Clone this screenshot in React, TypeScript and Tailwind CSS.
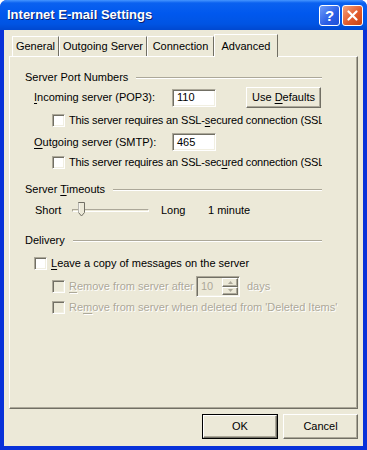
import React from "react";

const sunken =
  "border border-t-[#aca899] border-l-[#aca899] border-b-white border-r-white shadow-[inset_1px_1px_0_#716f64,inset_-1px_-1px_0_#f1efe2]";
const raised =
  "border border-t-white border-l-white border-b-[#716f64] border-r-[#716f64] shadow-[inset_-1px_-1px_0_#aca899]";

function U({ children }: { children: React.ReactNode }) {
  return <span className="underline underline-offset-[2px]">{children}</span>;
}

function Checkbox({ disabled }: { disabled?: boolean }) {
  return (
    <span
      className={`block h-[13px] w-[13px] shrink-0 ${sunken} ${
        disabled ? "bg-[#ece9d8]" : "bg-white"
      }`}
    />
  );
}

function GroupHeader({ label }: { label: React.ReactNode }) {
  return (
    <div className="flex h-[13px] items-center">
      <span className="leading-[13px]">{label}</span>
      <div className="ml-[8px] flex-1 border-t border-b border-t-[#aca899] border-b-white" />
    </div>
  );
}

function Button({
  children,
  isDefault,
  className,
}: {
  children: React.ReactNode;
  isDefault?: boolean;
  className?: string;
}) {
  return (
    <div className={`${isDefault ? "border border-black" : ""} ${className ?? ""}`}>
      <div
        className={`flex h-full w-full items-center justify-center bg-[#ece9d8] ${raised}`}
      >
        <span>{children}</span>
      </div>
    </div>
  );
}

export default function App() {
  const tabs = [
    { label: "General", w: "w-[47px]" },
    { label: "Outgoing Server", w: "w-[88px]" },
    { label: "Connection", w: "w-[67px]" },
  ];

  return (
    <div
      className="flex h-[450px] w-[367px] flex-col overflow-hidden rounded-t-[7px] bg-[#0831d9] text-[11px] text-black"
      style={{ fontFamily: '"Liberation Sans", Arial, sans-serif' }}
    >
      {/* title bar */}
      <div className="flex h-[30px] shrink-0 items-center bg-[linear-gradient(to_bottom,#4595ff_0%,#0a61f0_10%,#0058ee_45%,#0054e3_80%,#0048d0_100%)] pl-[7px] pr-[4px]">
        <span className="flex-1 text-[13px] font-bold text-white [text-shadow:1px_1px_0_#0a1e6e]">
          Internet E-mail Settings
        </span>
        <div className="flex gap-[2px]">
          <div className="flex h-[21px] w-[21px] items-center justify-center rounded-[3px] border border-white bg-[linear-gradient(135deg,#6f9cf8,#2a5ee6_60%,#1d4fd8)] text-[15px] font-bold leading-none text-white">
            ?
          </div>
          <div className="flex h-[21px] w-[21px] items-center justify-center rounded-[3px] border border-white bg-[linear-gradient(135deg,#f3a37f,#e35b2c_55%,#c94313)]">
            <svg width="11" height="11" viewBox="0 0 11 11">
              <path d="M1.5 1.5 L9.5 9.5 M9.5 1.5 L1.5 9.5" stroke="white" strokeWidth="2.2" strokeLinecap="round" />
            </svg>
          </div>
        </div>
      </div>

      {/* window body */}
      <div className="mx-[4px] mb-[4px] flex flex-1 flex-col bg-[#ece9d8] px-[5px]">
        {/* tabs */}
        <div className="mt-[4px] flex h-[22px] items-end pl-[3px]">
          {tabs.map((t) => (
            <div
              key={t.label}
              className={`${t.w} flex h-[20px] items-center justify-center border-t border-l border-r border-t-white border-l-white border-r-[#716f64]`}
            >
              {t.label}
            </div>
          ))}
          <div className="relative z-10 -mb-px flex h-[23px] w-[64px] items-start justify-center border-t border-l border-r border-t-white border-l-white border-r-[#716f64] bg-[#ece9d8] pt-[3px]">
            Advanced
          </div>
        </div>

        {/* tab panel */}
        <div className="h-[353px] border border-t-white border-l-white border-b-[#716f64] border-r-[#716f64] shadow-[inset_-1px_-1px_0_#aca899]">
          <div className="ml-[15px] w-[297px]">
            <div className="mt-[14px]">
              <GroupHeader label="Server Port Numbers" />
            </div>

            <div className="mt-[3px] flex h-[21px] items-center">
              <span className="ml-[9px] w-[138px]">
                <U>I</U>ncoming server (POP3):
              </span>
              <div className={`flex h-[18px] w-[44px] items-center bg-white pl-[4px] ${sunken}`}>
                110
              </div>
              <Button className="ml-[30px] h-[21px] w-[75px]">
                Use <U>D</U>efaults
              </Button>
            </div>

            <div className="mt-[6px] flex h-[13px] items-center overflow-hidden whitespace-nowrap tracking-[-0.15px]">
              <span className="ml-[27px]">
                <Checkbox />
              </span>
              <span className="ml-[4px]">
                This server requires an SSL-<U>s</U>ecured connection (SSL)
              </span>
            </div>

            <div className="mt-[6px] flex h-[18px] items-center">
              <span className="ml-[9px] w-[138px]">
                <U>O</U>utgoing server (SMTP):
              </span>
              <div className={`flex h-[18px] w-[44px] items-center bg-white pl-[4px] ${sunken}`}>
                465
              </div>
            </div>

            <div className="mt-[5px] flex h-[13px] items-center overflow-hidden whitespace-nowrap tracking-[-0.15px]">
              <span className="ml-[27px]">
                <Checkbox />
              </span>
              <span className="ml-[4px]">
                This server requires an SSL-sec<U>u</U>red connection (SSL)
              </span>
            </div>

            <div className="mt-[14px]">
              <GroupHeader
                label={
                  <>
                    Server <U>T</U>imeouts
                  </>
                }
              />
            </div>

            <div className="mt-[6px] flex h-[16px] items-center">
              <span className="ml-[10px] w-[37px]">Short</span>
              <div className="relative h-[16px] w-[77px]">
                <div className="absolute left-0 right-0 top-[7px] h-[3px] border border-t-[#aca899] border-l-[#aca899] border-b-white border-r-white bg-[#ece9d8]" />
                <svg className="absolute left-[6px] top-0" width="7" height="15" viewBox="0 0 7 15">
                  <path d="M0.5 0.5 H6.5 V10.5 L3.5 14 L0.5 10.5 Z" fill="#ece9d8" stroke="#716f64" />
                  <path d="M1 1 V10.5" stroke="white" />
                </svg>
              </div>
              <span className="ml-[12px] w-[47px]">Long</span>
              <span>1 minute</span>
            </div>

            <div className="mt-[16px]">
              <GroupHeader label="Delivery" />
            </div>

            <div className="mt-[10px] flex h-[13px] items-center">
              <span className="ml-[9px]">
                <Checkbox />
              </span>
              <span className="ml-[4px]">
                <U>L</U>eave a copy of messages on the server
              </span>
            </div>

            <div className="mt-[6px] flex h-[21px] items-center text-[#aca899]">
              <span className="ml-[27px]">
                <Checkbox disabled />
              </span>
              <span className="ml-[4px] w-[127px] [text-shadow:1px_1px_0_white]">
                <U>R</U>emove from server after
              </span>
              <div className={`flex h-[21px] w-[44px] items-center bg-[#ece9d8] ${sunken}`}>
                <span className="ml-[4px] flex-1">10</span>
                <div className="mr-[1px] flex h-[17px] w-[16px] flex-col">
                  <div className={`flex flex-1 items-center justify-center ${raised}`}>
                    <svg width="5" height="3" viewBox="0 0 5 3">
                      <path d="M2.5 0 L5 3 H0 Z" fill="#aca899" />
                    </svg>
                  </div>
                  <div className={`flex flex-1 items-center justify-center ${raised}`}>
                    <svg width="5" height="3" viewBox="0 0 5 3">
                      <path d="M0 0 H5 L2.5 3 Z" fill="#aca899" />
                    </svg>
                  </div>
                </div>
              </div>
              <span className="ml-[7px] [text-shadow:1px_1px_0_white]">days</span>
            </div>

            <div className="mt-[4px] flex h-[13px] items-center whitespace-nowrap text-[#aca899]">
              <span className="ml-[27px]">
                <Checkbox disabled />
              </span>
              <span className="ml-[4px] [text-shadow:1px_1px_0_white]">
                Re<U>m</U>ove from server when deleted from 'Deleted Items'
              </span>
            </div>
          </div>
        </div>

        {/* footer buttons */}
        <div className="mt-[5px] flex justify-end gap-[5px]">
          <Button isDefault className="h-[25px] w-[76px]">
            OK
          </Button>
          <Button className="h-[25px] w-[75px]">Cancel</Button>
        </div>
      </div>
    </div>
  );
}
